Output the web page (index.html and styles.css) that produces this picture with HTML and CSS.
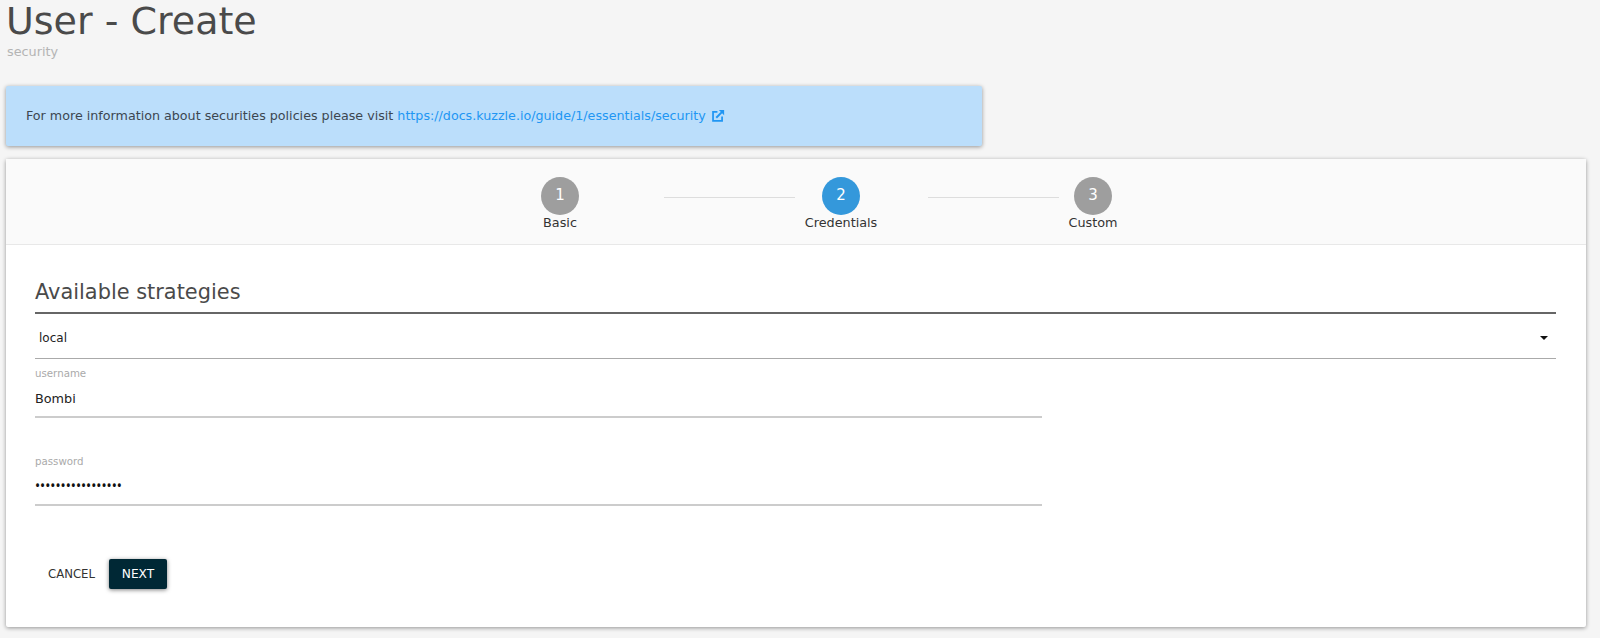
FILE: index.html
```html
<!DOCTYPE html>
<html lang="en">
<head>
<meta charset="utf-8">
<title>User - Create</title>
<link rel="stylesheet" href="styles.css">
</head>
<body>
<header class="page-head">
  <h1 class="page-title">User - Create</h1>
  <div class="page-sub">security</div>
</header>
<div class="notice">
  <span>For more information about securities policies please visit</span>
  <a class="notice-link" href="#">https://docs.kuzzle.io/guide/1/essentials/security
    <svg class="ext-icon" viewBox="0 0 24 24" width="14" height="14"><path fill="none" stroke="#2196f3" stroke-width="3" d="M11 5H3.500V20.500H19V13"/><path fill="none" stroke="#2196f3" stroke-width="3.400" d="M9 15L20 4"/><path fill="#2196f3" d="M13.500 1.500H22.500V10.500Z"/></svg>
  </a>
</div>
<main class="card">
  <div class="stepper">
    <div class="step step-basic"><div class="step-dot">1</div><div class="step-label">Basic</div></div>
    <div class="step-line"></div>
    <div class="step step-cred"><div class="step-dot active">2</div><div class="step-label">Credentials</div></div>
    <div class="step-line"></div>
    <div class="step step-custom"><div class="step-dot">3</div><div class="step-label">Custom</div></div>
  </div>
  <div class="card-body">
    <h2 class="section-title">Available strategies</h2>
    <div class="select"><span>local</span><span class="caret"></span></div>
    <div class="field field-first">
      <div class="field-label">username</div>
      <div class="field-value">Bombi</div>
    </div>
    <div class="field field-second">
      <div class="field-label">password</div>
      <div class="field-value dots">•••••••••••••••••</div>
    </div>
    <div class="actions">
      <button class="btn btn-flat">CANCEL</button>
      <button class="btn btn-raised">NEXT</button>
    </div>
  </div>
</main>
</body>
</html>
```
FILE: styles.css
```css
* { box-sizing: border-box; }
html, body { margin: 0; height: 638px; overflow: hidden; }
body {
  background: #f5f5f5;
  font-family: "DejaVu Sans", sans-serif;
  color: #333;
  padding: 0 14px 0 6px;
}
.page-head { height: 86px; }
.page-title {
  margin: 0;
  font-weight: 400;
  font-size: 38px;
  line-height: 42px;
  color: #4a4a4a;
}
.page-sub {
  padding: 1px 0 0 1px;
  font-size: 12.800px;
  line-height: 18px;
  color: #b4b4b4;
}
.notice {
  width: 976px;
  height: 60px;
  padding: 0 0 1px 20px;
  display: flex;
  align-items: center;
  gap: 4px;
  background: #bbdefb;
  border-radius: 2px;
  font-size: 12.700px;
  color: #3c4650;
  box-shadow: 0 1px 4px rgba(0,0,0,.4);
}
.notice-link { color: #2196f3; text-decoration: none; display: flex; align-items: center; gap: 5px; }
.ext-icon { display: block; }
.card {
  margin-top: 13px;
  width: 1580px;
  height: 468px;
  background: #fff;
  border-radius: 2px;
  box-shadow: 0 1px 4px rgba(0,0,0,.4);
}
.stepper {
  height: 86px;
  background: #fafafa;
  border-bottom: 1px solid #e8e8e8;
  display: flex;
  padding: 18px 0 0 501px;
}
.step { display: flex; flex-direction: column; align-items: center; }
.step-basic { width: 106px; }
.step-cred { width: 72px; }
.step-custom { width: 48px; }
.step-dot {
  width: 38px;
  height: 38px;
  border-radius: 50%;
  background: #9e9e9e;
  color: #fff;
  font-size: 15px;
  line-height: 36px;
  text-align: center;
  flex: none;
}
.step-dot.active { background: #3498db; }
.step-label { font-size: 12.800px; line-height: 16px; white-space: nowrap; color: #333; }
.step-line { width: 131px; height: 1px; background: #ddd; margin: 20px 10px 0 51px; }
.card-body { padding: 0 30px 0 29px; }
.section-title {
  margin: 0;
  height: 69px;
  padding-top: 33px;
  border-bottom: 2px solid #666;
  font-weight: 400;
  font-size: 20.900px;
  line-height: 28px;
  color: #4a4a4a;
}
.select {
  height: 45px;
  padding: 3px 8px 0 4px;
  display: flex;
  justify-content: space-between;
  align-items: center;
  border-bottom: 1px solid #aaa;
  font-size: 12px;
  color: #222;
}
.caret {
  width: 0;
  height: 0;
  border-left: 4px solid transparent;
  border-right: 4px solid transparent;
  border-top: 4px solid #111;
}
.field { width: 1007px; border-bottom: 2px solid #ccc; }
.field-first { height: 59px; padding-top: 7px; }
.field-second { margin-top: 30px; height: 58px; padding-top: 6px; }
.field-label { font-size: 10.240px; line-height: 14px; color: #aaa; }
.field-first .field-value { margin-top: 10px; }
.field-value { font-size: 12.800px; line-height: 18px; margin-top: 9px; color: #222; }
.dots { font-family: "Noto Sans", sans-serif; font-size: 13.600px; color: #111; }
.actions { margin-top: 53px; display: flex; gap: 7px; padding-left: 6px; }
.btn {
  height: 30px;
  border: 0;
  border-radius: 2px;
  padding: 0 7px;
  font-family: "DejaVu Sans", sans-serif;
  font-size: 11.700px;
  background: transparent;
  color: #333;
}
.btn-raised {
  width: 58px;
  font-size: 12.200px;
  background: #002835;
  color: #fff;
  box-shadow: 0 1px 4px rgba(0,0,0,.5);
}
```
